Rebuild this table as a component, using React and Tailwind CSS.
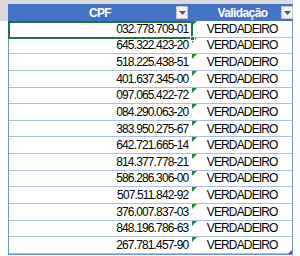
import React from 'react';

const rows = [
  '032.778.709-01',
  '645.322.423-20',
  '518.225.438-51',
  '401.637.345-00',
  '097.065.422-72',
  '084.290.063-20',
  '383.950.275-67',
  '642.721.665-14',
  '814.377.778-21',
  '586.286.306-00',
  '507.511.842-92',
  '376.007.837-03',
  '848.196.786-63',
  '267.781.457-90',
];

const FilterButton = () => (
  <div className="w-[12px] h-[13px] bg-[#f2f2f2] border border-[#c6c6c6] flex items-center justify-center">
    <svg width="7" height="4" viewBox="0 0 7 4">
      <path d="M0 0 H7 L3.5 4 Z" fill="#595959" />
    </svg>
  </div>
);

const App = () => {
  return (
    <div className="w-[300px] h-[256px] bg-white overflow-hidden text-black" style={{ fontFamily: '"Liberation Sans", Arial, sans-serif' }}>
      {/* header row */}
      <div className="w-[293px] bg-[#d9d9d9] pt-[4px] pl-[8px]">
        <div className="flex h-[17px] bg-[#4472c4] text-white font-bold text-[12px] tracking-[-0.6px]">
          <div className="relative w-[184px] flex items-center justify-center">
            <span>CPF</span>
            <div className="absolute right-[4px] top-[2px]"><FilterButton /></div>
          </div>
          <div className="relative w-[101px] flex items-center justify-center">
            <span>Validação</span>
            <div className="absolute right-[0px] top-[2px]"><FilterButton /></div>
          </div>
        </div>
      </div>

      {/* body */}
      <div className="relative ml-[8px] w-[285px] border-l border-r border-b border-[#6f93d3] text-[12px] tracking-[-0.85px]">
        {rows.map((cpf, i) => (
          <div key={cpf} className="relative flex h-[16.64px] border-b border-[#a9bfe6] last:border-b-0">
            <div className="w-[184px] flex items-center justify-end pr-[4px] leading-none">{cpf}</div>
            <div className="w-[100px] flex items-center justify-center leading-none">VERDADEIRO</div>
            <svg className="absolute left-[183px] top-[0px]" width="5" height="5" viewBox="0 0 5 5">
              <path d="M0 0 H5 L0 5 Z" fill="#1e8a3a" />
            </svg>
          </div>
        ))}
        {/* selected cell */}
        <div className="absolute -left-[1px] top-[0px] w-[185px] h-[18px] border-2 border-[#217346] pointer-events-none" />
        <div className="absolute left-[181px] top-[15px] w-[5px] h-[5px] bg-[#217346] border border-white" />
        {/* resize handle */}
        <svg className="absolute right-[0px] bottom-[0px]" width="4" height="4" viewBox="0 0 4 4">
          <path d="M4 0 V4 H0 Z" fill="#44546a" />
        </svg>
      </div>
    </div>
  );
};

export default App;
